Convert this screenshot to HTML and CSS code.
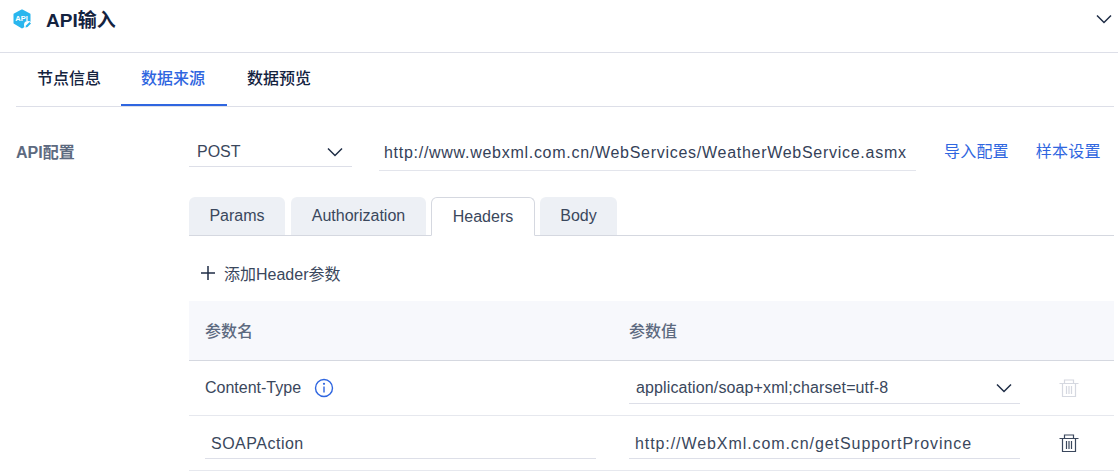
FILE: index.html
```html
<!DOCTYPE html>
<html lang="zh-CN">
<head>
<meta charset="utf-8">
<title>API输入</title>
<link rel="stylesheet" href="styles.css">
</head>
<body>
<header class="head">
  <div class="head-left">
    <svg class="logo" width="20" height="20" viewBox="0 0 20 20">
      <path d="M10 1.500 17.500 5.500V14L10 18.500 2.500 14V5.500Z" class="logo-hex"/>
      <text x="9.500" y="12" class="logo-text" text-anchor="middle">API</text>
      <circle cx="16" cy="16" r="4" fill="#fff"/>
      <path d="M13.500 18.500 14 16.500 17.500 13 19 14.500 15.500 18Z" fill="#29b6ee"/>
    </svg>
    <h1 class="title">API输入</h1>
  </div>
  <svg class="chev-head" width="16" height="10" viewBox="0 0 16 10"><path d="M1 1.500 8 8.500 15 1.500" class="chev"/></svg>
</header>

<nav class="nav">
  <a class="nav-item">节点信息</a>
  <a class="nav-item active">数据来源</a>
  <a class="nav-item">数据预览</a>
</nav>

<section class="config">
  <div class="label">API配置</div>
  <div class="main">
    <div class="top-row">
      <div class="select">
        <span>POST</span>
        <svg width="16" height="10" viewBox="0 0 16 10"><path d="M1 1.500 8 8.500 15 1.500" class="chev"/></svg>
      </div>
      <div class="url">http://www.webxml.com.cn/WebServices/WeatherWebService.asmx</div>
      <a class="link first">导入配置</a>
      <a class="link">样本设置</a>
    </div>

    <div class="tabs">
      <div class="tab params">Params</div>
      <div class="tab auth">Authorization</div>
      <div class="tab current">Headers</div>
      <div class="tab body-tab">Body</div>
    </div>

    <div class="add">
      <svg width="14" height="14" viewBox="0 0 14 14"><path d="M7 0V14M0 7H14" class="plus"/></svg>
      <span>添加Header参数</span>
    </div>

    <div class="table">
      <div class="row thead">
        <div class="cell">参数名</div>
        <div class="cell">参数值</div>
        <div class="cell-del"></div>
      </div>
      <div class="row">
        <div class="cell name">
          <span>Content-Type</span>
          <svg width="20" height="20" viewBox="0 0 20 20"><circle cx="10" cy="10" r="8.500" class="info"/><path d="M10 8.500V14.500" class="info"/><circle cx="10" cy="5.800" r="1.100" fill="#2f66e0"/></svg>
        </div>
        <div class="cell">
          <div class="field dropdown">
            <span>application/soap+xml;charset=utf-8</span>
            <svg width="16" height="10" viewBox="0 0 16 10"><path d="M1 1.500 8 8.500 15 1.500" class="chev"/></svg>
          </div>
        </div>
        <div class="cell-del">
          <svg class="trash disabled" width="20" height="20" viewBox="0 0 20 20"><path d="M.5 5.500H19.500M5.500 5.500V2H14.500V5.500M3.500 5.500V18.500H16.500V5.500M7.500 8V16M10 8V16M12.500 8V16"/></svg>
        </div>
      </div>
      <div class="row">
        <div class="cell">
          <div class="field input key">SOAPAction</div>
        </div>
        <div class="cell">
          <div class="field input value">http://WebXml.com.cn/getSupportProvince</div>
        </div>
        <div class="cell-del">
          <svg class="trash" width="20" height="20" viewBox="0 0 20 20"><path d="M.5 5.500H19.500M5.500 5.500V2H14.500V5.500M3.500 5.500V18.500H16.500V5.500M7.500 8V16M10 8V16M12.500 8V16"/></svg>
        </div>
      </div>
    </div>
  </div>
</section>
</body>
</html>
```
FILE: styles.css
```css
* { box-sizing: border-box; }
html, body { margin: 0; padding: 0; }
body {
  width: 1118px;
  height: 473px;
  overflow: hidden;
  background: #fff;
  color: #1f2d46;
  font-family: "Liberation Sans", "Noto Sans CJK SC", sans-serif;
  font-size: 16px;
}
.head {
  height: 53px;
  border-bottom: 1px solid #dddfe8;
  display: flex;
  justify-content: space-between;
  padding: 9px 6px 0 12px;
}
.head-left { display: flex; align-items: flex-start; }
.logo-hex { fill: #29b6ee; stroke: #29b6ee; stroke-width: 2; stroke-linejoin: round; }
.logo-text { font: 700 7.5px "Liberation Sans", sans-serif; fill: #fff; }
.title {
  margin: 0 0 0 14px;
  font-size: 19px;
  line-height: 24px;
  font-weight: 600;
  color: #14233f;
}
.chev-head { margin-top: 5px; }
.chev { fill: none; stroke: #1f2d46; stroke-width: 1.5; }
.nav {
  margin: 0 4px 0 16px;
  height: 54px;
  border-bottom: 1px solid #dddfe8;
  display: flex;
}
.nav-item {
  height: 53px;
  padding: 0 20px 0 21px;
  font-size: 16px;
  line-height: 52px;
  font-weight: 500;
  color: #14233f;
}
.nav-item.active {
  padding: 0 21px 0 20px;
  width: 106px;
  color: #2f66e0;
  border-bottom: 2px solid #2f66e0;
}
.nav-item:last-child { padding-left: 20px; }
.config { display: flex; padding: 31px 4px 0 16px; }
.label {
  width: 173px;
  font-size: 16px;
  line-height: 30px;
  font-weight: 600;
  color: #5d6a80;
}
.main { width: 925px; }
.top-row { display: flex; align-items: flex-start; height: 59px; }
.select {
  width: 163px;
  height: 29px;
  border-bottom: 1px solid #dddfe8;
  display: flex;
  justify-content: space-between;
  align-items: center;
  padding: 0 9px 0 8px;
  color: #3a475c;
}
.url {
  width: 537px;
  height: 33px;
  margin-left: 27px;
  border-bottom: 1px solid #e3e5ec;
  padding: 0 0 0 5px;
  line-height: 30px;
  letter-spacing: 0.72px;
  color: #344158;
  white-space: nowrap;
  overflow: hidden;
}
.link { line-height: 28px; color: #2f66e0; margin-left: 27px; letter-spacing: 0.2px; }
.link.first { margin-left: 28px; }
.tabs {
  display: flex;
  height: 39px;
  border-bottom: 1px solid #d5d8e0;
}
.tab {
  height: 38px;
  border-radius: 6px 6px 0 0;
  background: #edf0f5;
  line-height: 38px;
  text-align: center;
  color: #3a475c;
}
.params { width: 96px; margin-right: 6px; }
.auth { width: 135px; margin-right: 5px; }
.tab.current {
  width: 104px;
  height: 39px;
  margin-right: 5px;
  background: #fff;
  border: 1px solid #d5d8e0;
  border-bottom: 1px solid #fff;
  line-height: 37px;
}
.body-tab { width: 77px; }
.add {
  height: 66px;
  display: flex;
  align-items: center;
  padding: 14px 0 6px 12px;
  gap: 9px;
  color: #3a475c;
}
.plus { stroke: #1f2d46; stroke-width: 1.5; fill: none; }
.table { width: 925px; margin-top: -1px; }
.row {
  display: grid;
  grid-template-columns: 424px 424px 77px;
  height: 55px;
  border-bottom: 1px solid #e6e8ee;
  align-items: center;
}
.thead {
  height: 60px;
  padding-bottom: 2px;
  background: #f7f8fc;
  border-bottom: 1px solid #d5d8e0;
  font-weight: 500;
  color: #5d6a80;
}
.cell { padding: 0 16px; }
.name {
  display: flex;
  align-items: center;
  gap: 13px;
  color: #3a475c;
}
.info { fill: none; stroke: #2f66e0; stroke-width: 1.4; }
.field {
  height: 32px;
  width: 391px;
  border-bottom: 1px solid #dddfe8;
  color: #3a475c;
  line-height: 32px;
}
.dropdown {
  display: flex;
  justify-content: space-between;
  align-items: center;
  padding: 0 8px 0 7px;
  letter-spacing: 0.12px;
}
.input { padding: 0 6px; line-height: 34px; }
.key { letter-spacing: 0.5px; }
.value { letter-spacing: 0.92px; }
.cell-del { display: flex; justify-content: center; padding-right: 14px; }
.trash { fill: none; stroke: #3a475c; stroke-width: 1.2; }
.trash.disabled { stroke: #d5d8e0; }
```
